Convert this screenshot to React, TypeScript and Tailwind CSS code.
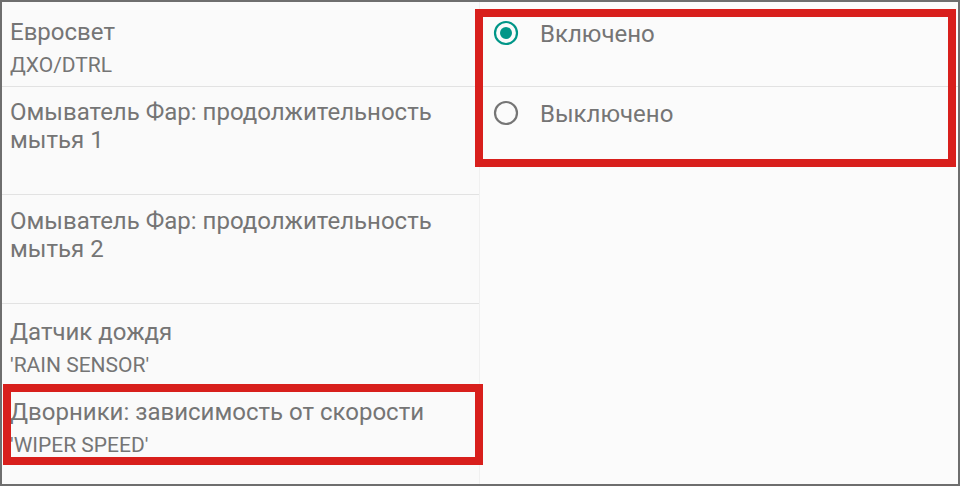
function Row({ title, sub, className }: { title: string; sub?: string; className: string }) {
  return (
    <div className={"border-b border-[#e2e2e2] pl-2 pr-4 " + className}>
      <p className="text-[24px] leading-[28px] text-[#757575]">{title}</p>
      {sub && <p className="mt-[5px] text-[21px] leading-[28px] text-[#757575]">{sub}</p>}
    </div>
  )
}

function Radio({ checked, label }: { checked: boolean; label: string }) {
  return (
    <div className="flex h-[85px] items-start border-b border-[#e2e2e2] pl-[13px] pt-[18px]">
      <svg width="26" height="26" viewBox="0 0 26 26" className="shrink-0">
        <circle cx="13" cy="13" r="11" fill="none" stroke={checked ? "#009688" : "#757575"} strokeWidth="2.2" />
        {checked && <circle cx="13" cy="13" r="6" fill="#009688" />}
      </svg>
      <span className="ml-[21px] text-[24px] leading-[28px] text-[#757575]">{label}</span>
    </div>
  )
}

export default function App() {
  return (
    <div className="relative flex h-[486px] w-[960px] border-2 border-[#6e6e6e] bg-[#fafafa] font-['Roboto',sans-serif]">
      <div className="flex w-[477px] flex-col">
        <Row className="h-[85px] pt-[16px]" title="Евросвет" sub="ДХО/DTRL" />
        <Row className="h-[108px] pt-[11px]" title="Омыватель Фар: продолжительность мытья 1" />
        <Row className="h-[109px] pt-[12px]" title="Омыватель Фар: продолжительность мытья 2" />
        <Row className="h-[90px] border-none pt-[14px]" title="Датчик дождя" sub="'RAIN SENSOR'" />
        <div className="pl-2 pt-[4px]">
          <p className="text-[24px] leading-[28px] text-[#757575]">Дворники: зависимость от скорости</p>
          <p className="mt-[5px] text-[21px] leading-[28px] text-[#757575]">'WIPER SPEED'</p>
        </div>
      </div>
      <div className="flex flex-1 flex-col border-l border-[#f0f0f0] bg-[#fbfbfb]">
        <Radio checked label="Включено" />
        <div className="h-[85px]">
          <div className="flex items-start pl-[13px] pt-[13px]">
            <svg width="26" height="26" viewBox="0 0 26 26" className="shrink-0">
              <circle cx="13" cy="13" r="11" fill="none" stroke="#757575" strokeWidth="2.2" />
            </svg>
            <span className="ml-[21px] text-[24px] leading-[28px] text-[#757575]">Выключено</span>
          </div>
        </div>
      </div>
      <div className="pointer-events-none absolute left-[473px] top-[7px] h-[158px] w-[481px] border-[8px] border-[#d81f1c]" />
      <div className="pointer-events-none absolute left-[1px] top-[382px] h-[81px] w-[480px] border-[8px] border-[#d81f1c]" />
    </div>
  )
}
